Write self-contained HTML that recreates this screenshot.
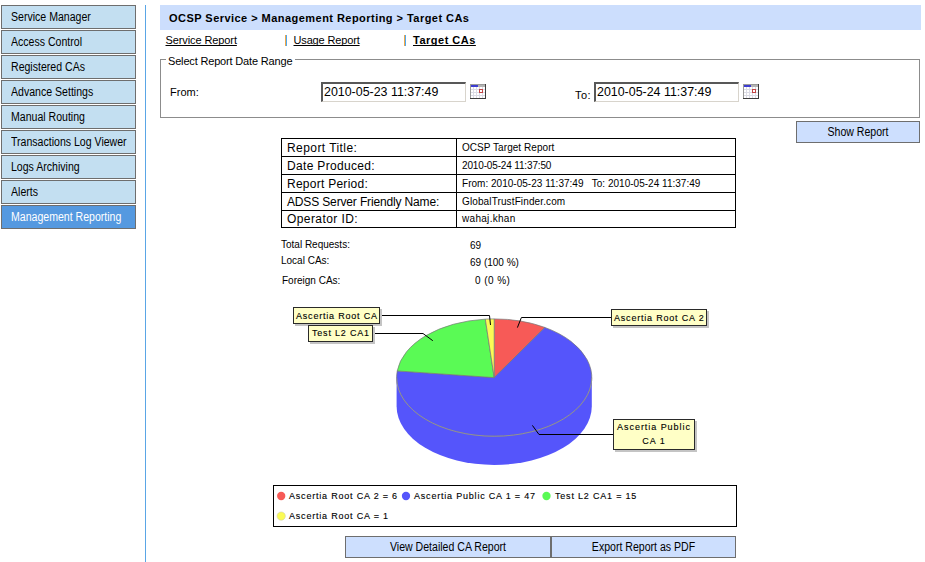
<!DOCTYPE html>
<html><head><meta charset="utf-8">
<style>
html,body{margin:0;padding:0;background:#fff;width:925px;height:562px;overflow:hidden;position:relative;font-family:"Liberation Sans",sans-serif;color:#000;}
.a{position:absolute;white-space:pre;}
.nav{position:absolute;left:1px;width:133px;height:22px;border:1px solid #6e6e6e;background:#c3dff1;}
.nav span{position:absolute;left:9px;top:4px;font-size:12px;line-height:15px;color:#000;white-space:pre;transform:scaleX(0.88);transform-origin:0 0;}
.nav.act{background:#5599e0;}
.nav.act span{color:#fff;}
#vline{position:absolute;left:145px;top:5px;width:1px;height:557px;background:#5aa6e6;}
#hdr{position:absolute;left:160px;top:5px;width:761px;height:25px;background:#ccdefd;}
#hdr span{position:absolute;left:9px;top:7px;font-size:11px;line-height:13px;font-weight:bold;letter-spacing:0.46px;white-space:pre;}
.lnk{position:absolute;font-size:11px;line-height:13px;text-decoration:underline;text-decoration-skip-ink:none;white-space:pre;}
.sep{position:absolute;width:1px;height:11px;background:#f0a848;border-right:1px solid #50a8f0;}
#fs{position:absolute;left:160px;top:59px;width:758px;height:57px;border:1px solid #8c8c8c;}
#legend{position:absolute;left:166px;top:55px;background:#fff;padding:0 3px 0 2px;font-size:11px;line-height:13px;letter-spacing:-0.17px;white-space:pre;}
.inp{position:absolute;width:142px;height:17px;border-top:2px solid #585858;border-left:2px solid #585858;border-right:1px solid #d8d4cc;border-bottom:1px solid #d8d4cc;background:#fff;}
.inp span{position:absolute;left:1px;top:0px;font-size:13px;line-height:15px;white-space:pre;transform:scaleX(0.955);transform-origin:0 0;}
.btn{position:absolute;height:20px;border:1px solid #6e6e6e;background:#cddffe;}
.btn span{position:absolute;left:0;right:0;top:3px;text-align:center;font-size:12px;line-height:14px;white-space:pre;transform:scaleX(0.88);}
table.rep{position:absolute;left:281px;top:138px;border-collapse:collapse;}
table.rep td{border:1px solid #000;height:17px;padding:0;}
.lab{font-size:12px;line-height:14px;padding-left:5px !important;white-space:pre;}
.val{font-size:10px;line-height:12px;padding-left:5px !important;white-space:pre;}
.sm{position:absolute;font-size:10px;line-height:12px;white-space:pre;}
.cl{position:absolute;font-size:9px;line-height:11px;letter-spacing:0.8px;-webkit-text-stroke:0.12px #000;white-space:pre;}
.lbox{position:absolute;background:#ffffc6;border:1px solid #2a2a2a;box-shadow:2px 2px 0 #c4c4c4;}
</style></head><body>
<div class="nav" style="top:5px"><span>Service Manager</span></div>
<div class="nav" style="top:30px"><span>Access Control</span></div>
<div class="nav" style="top:55px"><span>Registered CAs</span></div>
<div class="nav" style="top:80px"><span>Advance Settings</span></div>
<div class="nav" style="top:105px"><span>Manual Routing</span></div>
<div class="nav" style="top:130px"><span>Transactions Log Viewer</span></div>
<div class="nav" style="top:155px"><span>Logs Archiving</span></div>
<div class="nav" style="top:180px"><span>Alerts</span></div>
<div class="nav act" style="top:205px"><span>Management Reporting</span></div>
<div id="vline"></div>

<div id="hdr"><span>OCSP Service &gt; Management Reporting &gt; Target CAs</span></div>
<div class="lnk" style="left:165.5px;top:34px;letter-spacing:-0.1px">Service Report</div>
<div class="sep" style="left:285px;top:35px"></div>
<div class="lnk" style="left:293.5px;top:34px;letter-spacing:-0.15px">Usage Report</div>
<div class="sep" style="left:404px;top:35px"></div>
<div class="lnk" style="left:413px;top:34px;font-weight:bold;letter-spacing:0.5px">Target CAs</div>

<div id="fs"></div>
<div id="legend">Select Report Date Range</div>
<div class="a" style="left:170px;top:86px;font-size:11px;line-height:13px">From:</div>
<div class="inp" style="left:321px;top:82px"><span>2010-05-23 11:37:49</span></div>
<svg class="a" style="left:470px;top:84px" width="16" height="15" viewBox="0 0 16 15" shape-rendering="crispEdges"><rect x="0" y="0" width="16" height="15" fill="#dcdce6"/><rect x="1" y="3" width="2" height="2" fill="#ffffff"/><rect x="1" y="6" width="2" height="2" fill="#ffffff"/><rect x="1" y="9" width="2" height="2" fill="#ffffff"/><rect x="1" y="12" width="2" height="2" fill="#ffffff"/><rect x="4" y="3" width="2" height="2" fill="#ffffff"/><rect x="4" y="6" width="2" height="2" fill="#ffffff"/><rect x="4" y="9" width="2" height="2" fill="#ffffff"/><rect x="4" y="12" width="2" height="2" fill="#ffffff"/><rect x="7" y="3" width="2" height="2" fill="#ffffff"/><rect x="7" y="6" width="2" height="2" fill="#ffffff"/><rect x="7" y="9" width="2" height="2" fill="#ffffff"/><rect x="7" y="12" width="2" height="2" fill="#ffffff"/><rect x="10" y="3" width="2" height="2" fill="#ffffff"/><rect x="10" y="6" width="2" height="2" fill="#ffffff"/><rect x="10" y="9" width="2" height="2" fill="#ffffff"/><rect x="10" y="12" width="2" height="2" fill="#ffffff"/><rect x="13" y="3" width="2" height="2" fill="#ffffff"/><rect x="13" y="6" width="2" height="2" fill="#ffffff"/><rect x="13" y="9" width="2" height="2" fill="#ffffff"/><rect x="13" y="12" width="2" height="2" fill="#ffffff"/><rect x="0" y="0" width="16" height="1" fill="#9a9a9a"/><rect x="0" y="0" width="1" height="15" fill="#9a9a9a"/><rect x="15" y="0" width="1" height="15" fill="#3c3c3c"/><rect x="0" y="14" width="16" height="1" fill="#3c3c3c"/><rect x="1" y="1" width="7" height="2" fill="#3c3cd0"/><rect x="8" y="1" width="7" height="2" fill="#b4b4b4"/><rect x="9" y="5" width="4" height="1" fill="#c44444"/><rect x="9" y="8" width="4" height="1" fill="#c44444"/><rect x="9" y="5" width="1" height="4" fill="#c44444"/><rect x="12" y="5" width="1" height="4" fill="#c44444"/><rect x="10" y="6" width="2" height="2" fill="#ffffff"/></svg>
<div class="a" style="left:575px;top:89px;font-size:11px;line-height:13px;letter-spacing:0.5px">To:</div>
<div class="inp" style="left:594px;top:82px"><span>2010-05-24 11:37:49</span></div>
<svg class="a" style="left:743px;top:84px" width="16" height="15" viewBox="0 0 16 15" shape-rendering="crispEdges"><rect x="0" y="0" width="16" height="15" fill="#dcdce6"/><rect x="1" y="3" width="2" height="2" fill="#ffffff"/><rect x="1" y="6" width="2" height="2" fill="#ffffff"/><rect x="1" y="9" width="2" height="2" fill="#ffffff"/><rect x="1" y="12" width="2" height="2" fill="#ffffff"/><rect x="4" y="3" width="2" height="2" fill="#ffffff"/><rect x="4" y="6" width="2" height="2" fill="#ffffff"/><rect x="4" y="9" width="2" height="2" fill="#ffffff"/><rect x="4" y="12" width="2" height="2" fill="#ffffff"/><rect x="7" y="3" width="2" height="2" fill="#ffffff"/><rect x="7" y="6" width="2" height="2" fill="#ffffff"/><rect x="7" y="9" width="2" height="2" fill="#ffffff"/><rect x="7" y="12" width="2" height="2" fill="#ffffff"/><rect x="10" y="3" width="2" height="2" fill="#ffffff"/><rect x="10" y="6" width="2" height="2" fill="#ffffff"/><rect x="10" y="9" width="2" height="2" fill="#ffffff"/><rect x="10" y="12" width="2" height="2" fill="#ffffff"/><rect x="13" y="3" width="2" height="2" fill="#ffffff"/><rect x="13" y="6" width="2" height="2" fill="#ffffff"/><rect x="13" y="9" width="2" height="2" fill="#ffffff"/><rect x="13" y="12" width="2" height="2" fill="#ffffff"/><rect x="0" y="0" width="16" height="1" fill="#9a9a9a"/><rect x="0" y="0" width="1" height="15" fill="#9a9a9a"/><rect x="15" y="0" width="1" height="15" fill="#3c3c3c"/><rect x="0" y="14" width="16" height="1" fill="#3c3c3c"/><rect x="1" y="1" width="7" height="2" fill="#3c3cd0"/><rect x="8" y="1" width="7" height="2" fill="#b4b4b4"/><rect x="9" y="5" width="4" height="1" fill="#c44444"/><rect x="9" y="8" width="4" height="1" fill="#c44444"/><rect x="9" y="5" width="1" height="4" fill="#c44444"/><rect x="12" y="5" width="1" height="4" fill="#c44444"/><rect x="10" y="6" width="2" height="2" fill="#ffffff"/></svg>

<div class="btn" style="left:796px;top:121px;width:122px"><span>Show Report</span></div>

<table class="rep">
<tr><td class="lab" style="width:169px;letter-spacing:0.43px">Report Title:</td><td class="val" style="width:273px;letter-spacing:0.06px">OCSP Target Report</td></tr>
<tr><td class="lab" style="letter-spacing:0.33px">Date Produced:</td><td class="val" style="letter-spacing:-0.15px">2010-05-24 11:37:50</td></tr>
<tr><td class="lab" style="letter-spacing:0.26px">Report Period:</td><td class="val" style="letter-spacing:0.02px">From: 2010-05-23 11:37:49   To: 2010-05-24 11:37:49</td></tr>
<tr><td class="lab" style="letter-spacing:-0.15px">ADSS Server Friendly Name:</td><td class="val" style="letter-spacing:0.12px">GlobalTrustFinder.com</td></tr>
<tr><td class="lab" style="height:16px;letter-spacing:0.42px">Operator ID:</td><td class="val" style="height:16px;letter-spacing:0.3px">wahaj.khan</td></tr>
</table>

<div class="sm" style="left:281px;top:239px">Total Requests:</div>
<div class="sm" style="left:470px;top:240px">69</div>
<div class="sm" style="left:281px;top:255px">Local CAs:</div>
<div class="sm" style="left:470px;top:257px">69 (100 %)</div>
<div class="sm" style="left:282px;top:275px">Foreign CAs:</div>
<div class="sm" style="left:475px;top:275px;letter-spacing:0.45px">0 (0 %)</div>

<svg class="a" style="left:0;top:0" width="925" height="562"><path d="M396.60,377.60 L396.60,406.30 A97.6,58.7 0 0 0 591.80,406.30 L591.80,377.60 Z" fill="#5555fb" stroke="none"/>
<path d="M494.20,377.60 L494.20,318.90 A97.6,58.7 0 0 1 544.91,327.45 Z" fill="#f75a57" stroke="#777" stroke-width="0.7"/>
<path d="M494.20,377.60 L544.91,327.45 A97.6,58.7 0 1 1 397.23,370.93 Z" fill="#5555fb" stroke="#777" stroke-width="0.7"/>
<path d="M494.20,377.60 L397.23,370.93 A97.6,58.7 0 0 1 485.32,319.14 Z" fill="#5afa55" stroke="#777" stroke-width="0.7"/>
<path d="M494.20,377.60 L485.32,319.14 A97.6,58.7 0 0 1 494.20,318.90 Z" fill="#fbfb55" stroke="#777" stroke-width="0.7"/>
<path d="M396.60,377.60 A97.6,58.7 0 0 0 591.80,377.60" fill="none" stroke="#999" stroke-width="0.8"/>
<polyline points="380,315.5 489.5,315.5 490.5,325" fill="none" stroke="#000" stroke-width="1"/>
<polyline points="373,333.5 423,333.5 432.8,340.7" fill="none" stroke="#000" stroke-width="1"/>
<polyline points="611,317.5 521.4,317.5 517.4,327.6" fill="none" stroke="#000" stroke-width="1"/>
<polyline points="613,434.5 539,434.5 532.4,425.4" fill="none" stroke="#000" stroke-width="1"/>
<circle cx="281.2" cy="496" r="4.15" fill="#f75a57"/>
<circle cx="406" cy="496" r="4.15" fill="#5555fb"/>
<circle cx="546.5" cy="496" r="4.15" fill="#5afa55"/>
<circle cx="281.2" cy="516.1" r="4.15" fill="#fbfb55" stroke="#c8c8a0" stroke-width="0.5"/>
</svg>

<div class="lbox" style="left:293px;top:307px;width:85px;height:15px"></div>
<div class="cl" style="left:296px;top:311px">Ascertia Root CA</div>
<div class="lbox" style="left:308px;top:325px;width:63px;height:15px"></div>
<div class="cl" style="left:312px;top:327.5px">Test L2 CA1</div>
<div class="lbox" style="left:611px;top:309px;width:94px;height:15px"></div>
<div class="cl" style="left:614px;top:313px">Ascertia Root CA 2</div>
<div class="lbox" style="left:613px;top:419px;width:80px;height:29px"></div>
<div class="cl" style="left:612px;top:420px;width:84px;text-align:center;line-height:14px;letter-spacing:0.95px">Ascertia Public
CA 1</div>
<div class="cl" style="left:289px;top:491px">Ascertia Root CA 2 = 6</div>
<div class="cl" style="left:414px;top:491px">Ascertia Public CA 1 = 47</div>
<div class="cl" style="left:555px;top:491px">Test L2 CA1 = 15</div>
<div class="cl" style="left:289px;top:511px">Ascertia Root CA = 1</div>

<div class="a" style="left:273px;top:485px;width:462px;height:40px;border:1px solid #000"></div>

<div class="btn" style="left:345px;top:536px;width:204px"><span>View Detailed CA Report</span></div>
<div class="btn" style="left:551px;top:536px;width:183px"><span>Export Report as PDF</span></div>
</body></html>
